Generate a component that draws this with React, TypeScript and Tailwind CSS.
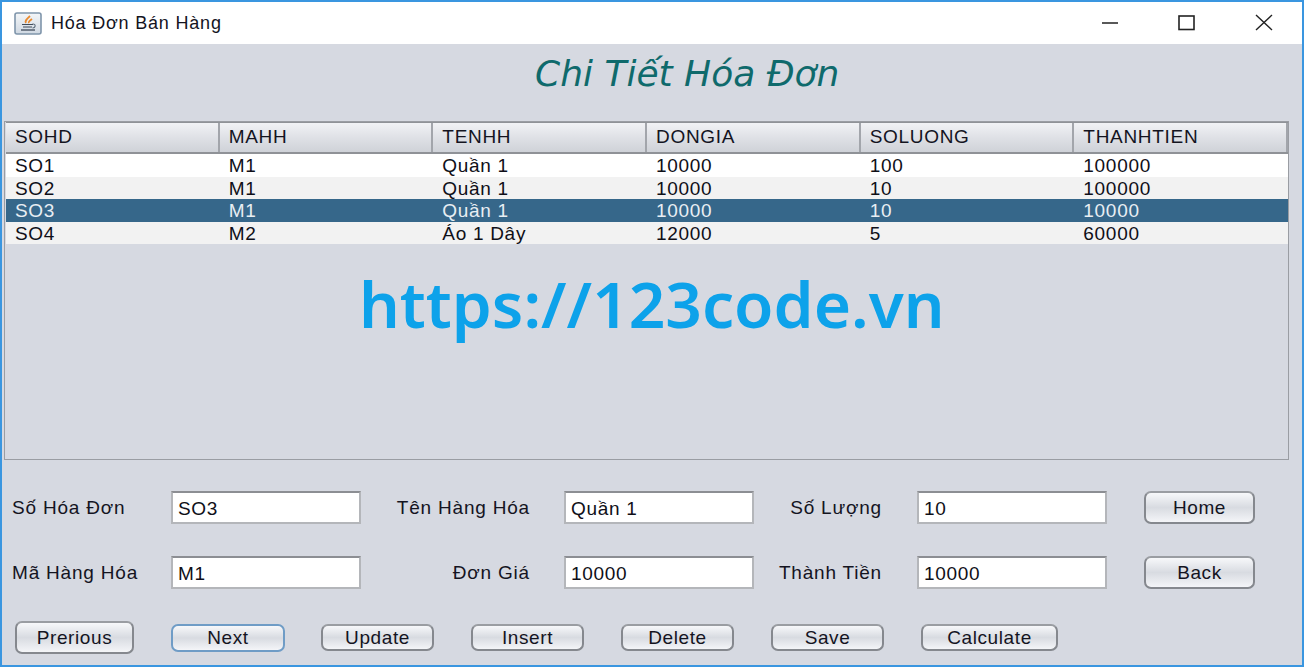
const font = 'font-["Liberation_Sans",Arial,sans-serif]';

const columns = ['SOHD', 'MAHH', 'TENHH', 'DONGIA', 'SOLUONG', 'THANHTIEN'];

const rows = [
  ['SO1', 'M1', 'Quần 1', '10000', '100', '100000'],
  ['SO2', 'M1', 'Quần 1', '10000', '10', '100000'],
  ['SO3', 'M1', 'Quần 1', '10000', '10', '10000'],
  ['SO4', 'M2', 'Áo 1 Dây', '12000', '5', '60000'],
];

function JavaIcon() {
  return (
    <svg width="28" height="23" viewBox="0 0 28 23" className="shrink-0">
      <defs>
        <linearGradient id="javaBg" x1="0" y1="0" x2="0" y2="1">
          <stop offset="0" stopColor="#f4f6f8" />
          <stop offset="1" stopColor="#cfd8e2" />
        </linearGradient>
      </defs>
      <rect x="1" y="1" width="26" height="21" rx="2" fill="url(#javaBg)" stroke="#7f95ab" strokeWidth="1.6" />
      <path d="M12 11c-1.500-2 .5-3.500 4-7M15 11c-1-1.500 1-2.500 3-4" fill="none" stroke="#ea8a2e" strokeWidth="1.8" />
      <path d="M8 12.500h11M9 15h9" stroke="#3f4a58" strokeWidth="1.2" />
      <path d="M18.500 12c3.500-.5 3.500 3.500 0 4" fill="none" stroke="#5d6c7c" strokeWidth="1.1" />
      <path d="M7 18h14" stroke="#3f4a58" strokeWidth="1.3" />
    </svg>
  );
}

function TitleBar() {
  return (
    <div className="flex h-[42px] items-center bg-white pl-3 shrink-0">
      <JavaIcon />
      <span className={`ml-[9px] text-[18px] tracking-[0.8px] text-[#14141f] ${font}`}>Hóa Đơn Bán Hàng</span>
      <div className="ml-auto flex items-center text-[#222]">
        <svg width="18" height="18" viewBox="0 0 18 18" className="mr-[59px]">
          <path d="M1 9h16" stroke="currentColor" strokeWidth="1.5" />
        </svg>
        <svg width="18" height="18" viewBox="0 0 18 18" className="mr-[59px]">
          <rect x="1" y="2" width="15" height="13.500" fill="none" stroke="currentColor" strokeWidth="1.6" />
        </svg>
        <svg width="18" height="18" viewBox="0 0 18 18" className="mr-[29px]">
          <path d="M1 1l16 15M17 1L1 16" stroke="currentColor" strokeWidth="1.4" />
        </svg>
      </div>
    </div>
  );
}

function InvoiceTable() {
  return (
    <div className="relative ml-[2px] h-[339px] w-[1285px] border border-[#9a9da3] pl-[1px]">
      <div className={`grid h-[32px] grid-cols-6 border-t border-b-2 border-[#8f9297] bg-gradient-to-b from-[#f1f2f5] via-[#dfe1e6] to-[#cfd2d8] ${font}`}>
        {columns.map((c) => (
          <div key={c} className="flex items-center border-r-2 border-[#a2a5ab] pl-[9px] text-[19px] tracking-[0.7px] text-[#14141f]">
            {c}
          </div>
        ))}
      </div>
      {rows.map((row, i) => (
        <div
          key={row[0]}
          className={`grid h-[22.5px] grid-cols-6 ${
            i === 2 ? 'bg-[#36678a] text-[#e8eef3]' : i % 2 === 0 ? 'bg-white text-[#0f0f18]' : 'bg-[#f2f2f2] text-[#0f0f18]'
          } ${font}`}
        >
          {row.map((cell, j) => (
            <div key={j} className="flex items-center pl-[9px] pt-[1px] text-[19px] leading-none tracking-[0.7px] whitespace-nowrap">
              {cell}
            </div>
          ))}
        </div>
      ))}
      <div className="absolute left-[354px] top-[150px] font-['Noto_Sans',sans-serif] text-[64px] font-semibold leading-none text-[#0da2ea] whitespace-nowrap">
        https://123code.vn
      </div>
    </div>
  );
}

function Field({ value }: { value: string }) {
  return (
    <input
      readOnly
      value={value}
      className={`h-[33px] w-[190px] border-2 border-[#b4b6ba] border-t-[#8c8e93] bg-white px-[5px] pt-[2px] text-[19px] tracking-[0.7px] text-[#0f0f18] outline-none ${font}`}
    />
  );
}

function Label({ text, className }: { text: string; className?: string }) {
  return <div className={`pt-[2px] text-[19px] tracking-[0.8px] text-[#14141f] whitespace-nowrap ${font} ${className ?? ''}`}>{text}</div>;
}

function Btn({ text, className, focused }: { text: string; className: string; focused?: boolean }) {
  return (
    <button
      className={`flex items-center justify-center rounded-[7px] border-2 ${
        focused ? 'border-[#6f9cc6]' : 'border-[#85888e] border-t-[#9a9da2]'
      } bg-gradient-to-b from-[#f7f8fa] via-[#d8dbe1] to-[#f4f5f8] pt-[1px] text-[19px] tracking-[0.6px] text-[#14141f] ${font} ${className}`}
    >
      {text}
    </button>
  );
}

export default function App() {
  return (
    <div className="flex h-[668px] w-[1304px] flex-col overflow-hidden bg-white">
      <div className="flex h-[667px] shrink-0 flex-col border-2 border-[#3a96e0]">
        <TitleBar />
        <div className="flex flex-1 flex-col bg-[#d6d9e1]">
          <div className="flex h-[77px] items-start pl-[533px] pt-[6px]">
            <div className="w-[305px] overflow-hidden whitespace-nowrap font-['DejaVu_Sans',sans-serif] text-[36px] italic leading-[48px] text-[#0f6a6c]">
              Chi Tiết Hóa Đơn
            </div>
          </div>
          <InvoiceTable />
          <div className="mt-[31px] grid grid-cols-[159px_190px_203px_190px_163px_190px_37px_111px] grid-rows-[33px_33px] items-center gap-y-[32px] pl-[10px]">
            <Label text="Số Hóa Đơn" />
            <Field value="SO3" />
            <Label text="Tên Hàng Hóa" className="pr-[34px] text-right" />
            <Field value="Quần 1" />
            <Label text="Số Lượng" className="pr-[35px] text-right" />
            <Field value="10" />
            <div />
            <Btn text="Home" className="h-[33px] w-[111px]" />
            <Label text="Mã Hàng Hóa" />
            <Field value="M1" />
            <Label text="Đơn Giá" className="pr-[34px] text-right" />
            <Field value="10000" />
            <Label text="Thành Tiền" className="pr-[35px] text-right" />
            <Field value="10000" />
            <div />
            <Btn text="Back" className="h-[33px] w-[111px]" />
          </div>
          <div className="mt-[32px] flex items-center pl-[13px]">
            <Btn text="Prerious" className="h-[33px] w-[119px]" />
            <Btn text="Next" focused className="ml-[37px] h-[28px] w-[114px]" />
            <Btn text="Update" className="ml-[36px] h-[27px] w-[113px]" />
            <Btn text="Insert" className="ml-[37px] h-[27px] w-[113px]" />
            <Btn text="Delete" className="ml-[37px] h-[27px] w-[113px]" />
            <Btn text="Save" className="ml-[37px] h-[27px] w-[113px]" />
            <Btn text="Calculate" className="ml-[37px] h-[27px] w-[137px]" />
          </div>
        </div>
      </div>
    </div>
  );
}
